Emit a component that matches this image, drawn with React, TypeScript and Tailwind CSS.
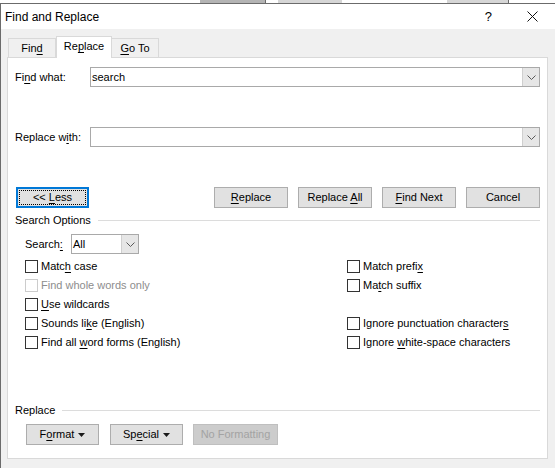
import React from 'react';

const K = ({ children }: { children: React.ReactNode }) => (
  <span className="underline decoration-1 underline-offset-[2px]">{children}</span>
);

function Btn({
  children,
  className = '',
  disabled = false,
}: {
  children: React.ReactNode;
  className?: string;
  disabled?: boolean;
}) {
  return (
    <div
      className={`h-[21px] flex items-center justify-center border ${
        disabled ? 'border-[#bfbfbf] bg-[#cccccc] text-[#a3a3a3]' : 'border-[#adadad] bg-[#e1e1e1] text-black'
      } ${className}`}
    >
      {children}
    </div>
  );
}

const Chevron = () => (
  <svg width="9" height="5" viewBox="0 0 9 5">
    <path d="M0.5 0.5 L4.5 4.5 L8.5 0.5" fill="none" stroke="#5a5a5a" strokeWidth="1" />
  </svg>
);

const Caret = () => (
  <svg width="7" height="4" viewBox="0 0 7 4" className="ml-[4px]">
    <path d="M0 0 H7 L3.5 4 Z" fill="#1a1a1a" />
  </svg>
);

function Combo({ value, className }: { value?: string; className: string }) {
  return (
    <div className={`h-[20px] border border-[#a9a9a9] bg-white flex ${className}`}>
      <div className="flex-1 pl-[1px] leading-[18px]">{value}</div>
      <div className="w-[17px] h-full bg-[#e6e6e6] border-l border-[#cfcfcf] flex items-center justify-center">
        <Chevron />
      </div>
    </div>
  );
}

function Check({ children, disabled = false }: { children: React.ReactNode; disabled?: boolean }) {
  return (
    <div className="h-[19px] flex items-center">
      <div className={`w-[13px] h-[13px] border bg-white ${disabled ? 'border-[#cccccc]' : 'border-[#333333]'}`} />
      <span className={`ml-[3px] ${disabled ? 'text-[#8d8d8d]' : ''}`}>{children}</span>
    </div>
  );
}

function Group({ title }: { title: string }) {
  return (
    <div className="flex items-center h-[16px]">
      <span>{title}</span>
      <div className="flex-1 h-px bg-[#dcdcdc] ml-[7px]" />
    </div>
  );
}

export default function App() {
  return (
    <div className="w-[555px] h-[468px] overflow-hidden bg-[#f0f0f0] font-['Liberation_Sans',Arial,sans-serif] text-[11px] text-black">
      {/* window behind */}
      <div className="h-[3px] bg-white flex">
        <div className="w-[200px]" />
        <div className="w-[65px] bg-[#b4b4b4]" />
        <div className="w-px bg-[#6a6a6a]" />
        <div className="w-[12px]" />
        <div className="w-[64px] bg-[#d6d6d6]" />
        <div className="w-[105px]" />
        <div className="w-[61px] bg-[#d6d6d6]" />
        <div className="w-px bg-[#6a6a6a]" />
      </div>

      <div className="border-l border-t border-[#6b6b6b] h-[465px]">
        <div className="h-[25px] bg-white flex items-center pl-[4px] text-[12px]">
          <span>Find and Replace</span>
          <span className="ml-auto mr-[35px] text-[13px]">?</span>
          <svg width="11" height="11" viewBox="0 0 11 11" className="mr-[17px]">
            <path d="M0.5 0.5 L10.5 10.5 M10.5 0.5 L0.5 10.5" stroke="#111" strokeWidth="1" />
          </svg>
        </div>

        <div className="pt-[7px]">
          <div className="flex items-end h-[21px] ml-[7px]">
            <div className="w-[48px] h-[19px] border border-b-0 border-[#d9d9d9] flex items-center justify-center">
              <span>
                Fin<K>d</K>
              </span>
            </div>
            <div className="relative z-10 w-[56px] h-[22px] mb-[-1px] bg-white border border-b-0 border-[#d9d9d9] flex items-center justify-center pb-[2px]">
              <span>
                Re<K>p</K>lace
              </span>
            </div>
            <div className="w-[47px] h-[19px] border border-b-0 border-l-0 border-[#d9d9d9] flex items-center justify-center">
              <span>
                <K>G</K>o To
              </span>
            </div>
          </div>

          <div className="ml-[6px] w-[541px] h-[402px] bg-white border border-[#d9d9d9] px-[7px]">
            <div className="mt-[9px] flex items-center">
              <div className="w-[75px]">
                Fi<K>n</K>d what:
              </div>
              <Combo value="search" className="w-[450px]" />
            </div>

            <div className="mt-[40px] flex items-center">
              <div className="w-[75px]">
                Replace w<K>i</K>th:
              </div>
              <Combo className="w-[450px]" />
            </div>

            <div className="mt-[40px] flex">
              <div className="ml-[1px] w-[73px] h-[21px] border-2 border-[#0078d7] bg-[#e1e1e1] p-[1px]">
                <div className="h-full border border-dotted border-black flex items-center justify-center">
                  <span>
                    &lt;&lt; <K>L</K>ess
                  </span>
                </div>
              </div>
              <div className="ml-auto flex gap-[10px]">
                <Btn className="w-[74px]">
                  <span>
                    <K>R</K>eplace
                  </span>
                </Btn>
                <Btn className="w-[74px]">
                  <span>
                    Replace <K>A</K>ll
                  </span>
                </Btn>
                <Btn className="w-[74px]">
                  <span>
                    <K>F</K>ind Next
                  </span>
                </Btn>
                <Btn className="w-[74px]">
                  <span>Cancel</span>
                </Btn>
              </div>
            </div>

            <div className="mt-[4px]">
              <Group title="Search Options" />
            </div>

            <div className="mt-[6px] flex items-center pl-[10px]">
              <div className="w-[46px]">
                Search<K>:</K>
              </div>
              <Combo value="All" className="w-[68px]" />
            </div>

            <div className="mt-[3px] flex pl-[10px]">
              <div className="w-[322px]">
                <Check>
                  Matc<K>h</K> case
                </Check>
                <Check disabled>Find whole words only</Check>
                <Check>
                  <K>U</K>se wildcards
                </Check>
                <Check>
                  Sounds li<K>k</K>e (English)
                </Check>
                <Check>
                  Find all <K>w</K>ord forms (English)
                </Check>
              </div>
              <div>
                <Check>
                  Match prefi<K>x</K>
                </Check>
                <Check>
                  Ma<K>t</K>ch suffix
                </Check>
                <div className="h-[19px]" />
                <Check>
                  Ignore punctuation character<K>s</K>
                </Check>
                <Check>
                  Ignore <K>w</K>hite-space characters
                </Check>
              </div>
            </div>

            <div className="mt-[50px]">
              <Group title="Replace" />
            </div>

            <div className="mt-[6px] flex pl-[11px]">
              <Btn className="w-[73px]">
                <span>
                  F<K>o</K>rmat
                </span>
                <Caret />
              </Btn>
              <Btn className="w-[73px] ml-[11px]">
                <span>
                  Sp<K>e</K>cial
                </span>
                <Caret />
              </Btn>
              <Btn disabled className="w-[85px] ml-[10px]">
                <span>No Formatting</span>
              </Btn>
            </div>
          </div>
        </div>
      </div>
    </div>
  );
}
